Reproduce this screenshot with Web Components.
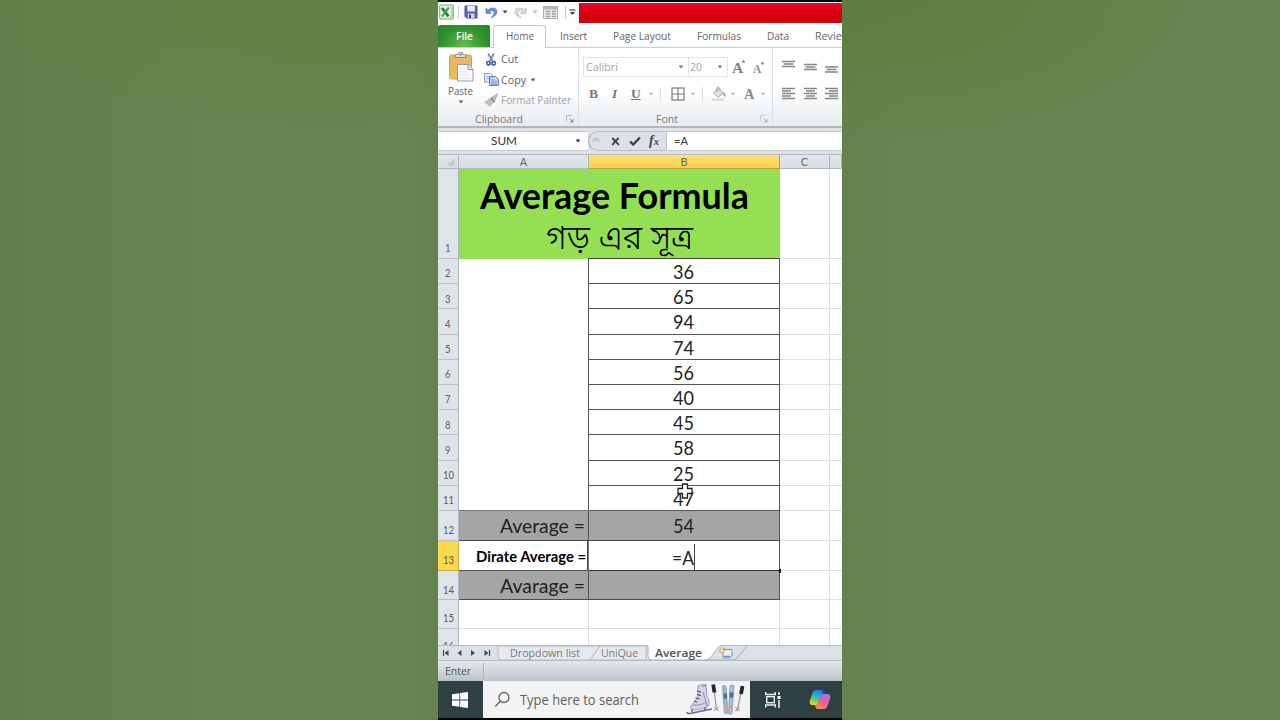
<!DOCTYPE html>
<html lang="en">
<head>
<meta charset="utf-8">
<title>Average Formula</title>
<style>
html,body{margin:0;height:100%;overflow:hidden}
body{font-family:"Open Sans","Noto Sans",sans-serif}
</style>
</head>
<body>
<video-stage>
  <title-bar></title-bar>
  <ribbon-tabs></ribbon-tabs>
  <ribbon-panel></ribbon-panel>
  <formula-bar></formula-bar>
  <sheet-grid></sheet-grid>
  <sheet-tabs></sheet-tabs>
  <status-bar></status-bar>
  <task-bar></task-bar>
</video-stage>
<script>
const define = (name, html, setup) => customElements.define(name, class extends HTMLElement {
  connectedCallback() {
    if (this.shadowRoot) return;
    const t = document.createElement('template');
    t.innerHTML = typeof html === 'function' ? html(this) : html;
    this.attachShadow({mode: 'open'}).appendChild(t.content.cloneNode(true));
    if (setup) setup(this);
  }
});

/* Text condensed or widened to the width given in "w". */
define('fit-text', '<style>:host{display:block;flex:none;white-space:nowrap;line-height:1.2}span{display:inline-block;transform-origin:0 50%}</style><span><slot></slot></span>', el => {
  const s = el.shadowRoot.querySelector('span');
  const w = +el.getAttribute('w');
  const natural = s.getBoundingClientRect().width;
  el.style.width = w + 'px';
  if (natural) s.style.transform = `scaleX(${w / natural})`;
});

const lines = (a, c = '#868686') => `<path d="${a.map(([x, y, w]) => `M${x} ${y}h${w}`).join('')}" stroke="${c}" stroke-width="1.5" fill="none"/>`;
const ICONS = {
  excel: [15, 16, '<rect x=".7" y="1" width="13.6" height="14" rx="1" fill="#e6f3e2" stroke="#6fae6a"/><path d="M11 3h2v10h-2" fill="none" stroke="#8cc48a"/><path d="M3 4l6.5 8.4" stroke="#1f7d2c" stroke-width="2.6"/><path d="M9.800 3.500L3 12.600" stroke="#46a548" stroke-width="2.200"/>'],
  save: [14, 14, '<path d="M1 1h12v12H2.600L1 11.400z" fill="#5a64bd" stroke="#4950a0"/><rect x="3.400" y="1" width="7.400" height="5.400" fill="#eef1fb"/><rect x="3.800" y="8.600" width="6.600" height="4.400" fill="#d9dcec"/><rect x="5" y="9.600" width="2" height="3.400" fill="#353d8c"/>'],
  undo: [13, 13, '<path d="M1 2v5.600h5.400L4.600 5.700C7 4 9.700 5 9 7.600c-.4 1.800-2 3-3.200 4.200 3.400-1 6-3 6.200-5.800C12.200 2 7.600.6 3 3.900z" fill="#6690d0" stroke="#4a72b4" stroke-width=".6"/>'],
  redo: [13, 13, '<path d="M12 2v5.600H6.600l1.800-1.900C6 4 3.300 5 4 7.600c.4 1.800 2 3 3.200 4.200-3.400-1-6-3-6.200-5.800C.8 2 5.400.6 10 3.900z" fill="#dcdcdc" stroke="#b5b5b5" stroke-width=".7"/>'],
  form: [15, 13, '<rect x=".5" y=".5" width="14" height="12" fill="#eee" stroke="#b5adb2"/><rect x="1" y="1" width="13" height="2.600" fill="#bbb3ba"/><path d="M2.500 5.500h5M2.500 8h5M2.500 10.500h5M9 5.500h4M9 8h4M9 10.500h4" stroke="#aaa1a8" stroke-width="1.300"/>'],
  down: [6, 4, '<path d="M.5.5h5L3 3.500z" fill="currentColor"/>'],
  custom: [7, 7, '<path d="M.5 1h6" stroke="#444" stroke-width="1.200"/><path d="M.7 3h5.600L3.500 6z" fill="#444"/>'],
  paste: [26, 30, '<rect x="1.500" y="3" width="22" height="24" rx="2" fill="#e9ba62" stroke="#cf9f50"/><path d="M7 5.500V3.500q0-1 1.500-1H10q0-2 2.500-2t2.500 2h1.500q1.500 0 1.500 1v2z" fill="#dfe1e8" stroke="#7e8291"/><circle cx="12.500" cy="2.700" r="1" fill="#777"/><path d="M9.500 12.500H20l5 5V29H9.500z" fill="#fafcff" stroke="#8f9cb6"/><path d="M20 12.500v5h5" fill="#dbe4f2" stroke="#8391ae"/><path d="M12 17h6M12 20h10M12 23h10M12 26h10" stroke="#dbe3ee"/>'],
  cut: [10, 13, '<path d="M2 .5L6.600 8M8 .5L3.700 8" stroke="#6d86bb" stroke-width="1.700"/><circle cx="2.400" cy="10.200" r="1.700" fill="none" stroke="#3f5fa8" stroke-width="1.700"/><circle cx="7.700" cy="10.200" r="1.700" fill="none" stroke="#3f5fa8" stroke-width="1.700"/>'],
  copy: [15, 13, '<path d="M.6.6h6l2.400 2.400v6H.6z" fill="#eef4fd" stroke="#8498bd"/><path d="M2 3.500h3M2 5.500h4" stroke="#94aee0"/><path d="M5.600 3.600h6l2.700 2.700v6.100H5.600z" fill="#c7dbf8" stroke="#4f6da6"/><path d="M7 7h4M7 9h6M7 11h6" stroke="#6f92d0"/>'],
  brush: [15, 14, '<path d="M13.500.8L8 4.500l2.500 3.300z" fill="#c3c3c3" stroke="#aaa"/><path d="M7.500 3.800l4 4.600-2 1.600L6 5.700z" fill="#999"/><path d="M6 5.600L.8 9.500q2.600.2 4.400 3.700l4.500-3.600z" fill="#cfbcb6" stroke="#b8aaa6" stroke-width=".8"/>'],
  launch: [8, 8, '<path d="M.5 6V.5H6" fill="none" stroke="#b0b7bf"/><path d="M3 3l3 3" stroke="#9fa8b2"/><path d="M7.500 3.500v4h-4z" fill="#8b949e"/>'],
  grow: [14, 16, '<text x="0" y="14" font-family="Liberation Serif" font-weight="bold" font-size="15.500" fill="#808080">A</text><path d="M9.500 3.500h4l-2-2.500z" fill="#777"/>'],
  shrink: [12, 14, '<text x="0" y="12" font-family="Liberation Serif" font-weight="bold" font-size="11.500" fill="#8c8c8c">A</text><path d="M7.500 1.500h4l-2 2.500z" fill="#777"/>'],
  borders: [14, 14, '<rect x="1" y="1" width="12" height="12" fill="none" stroke="#7b7b7b" stroke-width="1.200"/><path d="M7 1v12M1 7h12" stroke="#7b7b7b" stroke-width="1.100"/>'],
  bucket: [16, 16, '<path d="M2.500 6.500l5-4.500 4.800 5L7 11.300z" fill="#e2e2e2" stroke="#a5a5a5"/><path d="M6 6V2q0-1.500 1.500-1T9 5" fill="none" stroke="#a5a5a5"/><path d="M12 6q3 1 2 5.500-1.600-2-2-5.500" fill="#888"/><rect x="1" y="12.500" width="12" height="2.500" fill="#dcdcdc"/>'],
  atop: [14, 13, lines([[1, 1.500, 13], [2.500, 4, 10], [1, 6.500, 13]])],
  amid: [14, 13, lines([[1, 4.500, 13], [2.500, 7, 10], [1, 9.500, 13]])],
  abot: [14, 13, lines([[1, 7, 13], [2.500, 9.500, 10], [1, 12, 13]])],
  left: [14, 13, lines([[1, 1.500, 13], [1, 4, 9], [1, 6.500, 13], [1, 9, 9], [1, 11.500, 13]])],
  mid: [14, 13, lines([[1, 1.500, 13], [3, 4, 9], [1, 6.500, 13], [3, 9, 9], [1, 11.500, 13]])],
  right: [14, 13, lines([[1, 1.500, 13], [5, 4, 9], [1, 6.500, 13], [5, 9, 9], [1, 11.500, 13]])],
  cross: [9, 9, '<path d="M1.300 1q3 3 6.700 7M7.700 1Q4 4 1.300 8" stroke="#3c4147" stroke-width="1.800" fill="none"/>'],
  check: [12, 10, '<path d="M1 5.500l3.200 3L11 1.500" stroke="#3c4147" stroke-width="2.300" fill="none"/>'],
  corner: [8, 8, '<path d="M7.500 0v7.500H0z" fill="#c3c8ce"/>'],
  first: [8, 8, '<path d="M1.500 1v6" stroke="#444b55" stroke-width="1.200"/><path d="M6.500 1v6l-4-3z" fill="#444b55"/>'],
  prev: [6, 8, '<path d="M4.500 1v6l-4-3z" fill="#444b55"/>'],
  next: [6, 8, '<path d="M1 1v6l4-3z" fill="#444b55"/>'],
  last: [8, 8, '<path d="M6.500 1v6" stroke="#444b55" stroke-width="1.200"/><path d="M1.500 1v6l4-3z" fill="#444b55"/>'],
  newtab: [15, 12, '<path d="M5 2.500h9v6.500l-2.500 2H5z" fill="#edf2fc" stroke="#8090b5"/><path d="M6 9.500h6" stroke="#6d86bd" stroke-width="1.500"/><path d="M4 0v7M.5 3.500h7M1.500 1l5 5M6.500 1l-5 5" stroke="#d3a765" stroke-width="1"/><circle cx="4" cy="3.500" r="1.300" fill="#fff2b8"/>'],
  windows: [16, 16, '<path d="M0 2.300L7.400 1.200v6.400H0zM8.200 1.100L16 0v7.600H8.200zM0 8.400h7.400v6.400L0 13.700zM8.200 8.400H16V16l-7.800-1.100z" fill="#fff"/>'],
  search: [17, 17, '<circle cx="10" cy="6.500" r="5" fill="none" stroke="#666" stroke-width="1.300"/><path d="M6.300 10.300L1.200 15.500" stroke="#666" stroke-width="1.400"/>'],
  task: [16, 16, '<path d="M.7 0v2.500h9.600V0M.7 15.500V13h9.600v2.500" fill="none" stroke="#e9eeee" stroke-width="1.400"/><rect x="1.700" y="4.700" width="7.600" height="6" fill="none" stroke="#e9eeee" stroke-width="1.400"/><path d="M14 0v3M14 8v8" stroke="#e9eeee" stroke-width="1.500"/><rect x="12.500" y="4" width="3" height="3" fill="#fff"/>'],
  skates: [60, 32, '<path d="M12 2q4-2 8-1.500.5 6 1 12 3 3 2 8-1 4-9 4.500-8 2-9.500-.5-.5-2 2.500-5 5-5 5-9z" fill="#d5d4e6" stroke="#8b8cb0" stroke-width=".8"/><path d="M16 2q3 1 4-1.500M17 8l4 14M6 21q8 1 15-3" fill="none" stroke="#9c9dc0" stroke-width="1.200"/><path d="M11 7l4 1M11 10.500l4 1M9.500 14l4 1M8 17l3 1" stroke="#4a4d72" stroke-width="1.200"/><path d="M6 25v3M19 23v4" stroke="#6d7388" stroke-width="1.500"/><path d="M1 28q0 2 4 1.300L26 25" fill="none" stroke="#666d80" stroke-width="1.600"/><path d="M27.500 1l3 25" stroke="#999" stroke-width="1.200"/><path d="M27.200.5l1.300 8" stroke="#23262e" stroke-width="3.800"/><path d="M28 23l5 4M33 23l-5 4" stroke="#888" stroke-width=".8"/><path d="M36.500 2q2-2.500 3.800 1l1.500 26q-1.500 2-3.500 0z" fill="#94bdd0" stroke="#7897a8" stroke-width=".7"/><path d="M44 2q2-2.500 4 0l-2 27.500q-2 2-3.500 0z" fill="#a8bede" stroke="#7d92b1" stroke-width=".7"/><path d="M37.500 12h3.500M43.600 11h3.600" stroke="#4a6c91" stroke-width="5"/><path d="M38.300 23h3.300M43 23h3.500" stroke="#d79d8b" stroke-width="4"/><path d="M56 4l-5 23" stroke="#999" stroke-width="1.200"/><path d="M56.500 2L55 10" stroke="#23262e" stroke-width="3.800"/><path d="M49 23l5 4M54 23l-5 4" stroke="#888" stroke-width=".8"/>'],
  copilot: [22, 21, '<defs><linearGradient id="a" x1=".6" y1="0" x2=".3" y2="1"><stop stop-color="#2377ea"/><stop offset=".45" stop-color="#25b7c6"/><stop offset=".75" stop-color="#86ce4d"/><stop offset="1" stop-color="#f1d72e"/></linearGradient><linearGradient id="b" x1=".7" y1="0" x2=".3" y2="1"><stop stop-color="#b06af0"/><stop offset=".5" stop-color="#ee5c94"/><stop offset="1" stop-color="#fa8b50"/></linearGradient></defs><path d="M7 1h6.500Q15 1 15.500 3l.5 2-2 .5q-1.500.5-2 2L9.500 14q-.7 2-2.500 2H4Q-.5 16 1 11L4 3q.8-2 3-2z" fill="url(#a)"/><path d="M15 20H8.500Q7 20 6.500 18L6 16h1.500q1.500 0 2-2L12 7q.7-2 2.500-2H18q4.500 0 3 5l-3 8q-.8 2-3 2z" fill="url(#b)"/><path d="M13 1q2 0 2.500 2l.7 2H14q-1-2-1-4" fill="#1948b9"/>'],
  cursor: [16, 18, '<path d="M5.500 1h5v4.500H15v5h-4.500V15h-5v-4.500H1v-5h4.500z" fill="#fff" stroke="#222" stroke-width="1.300"/>']
};
define('x-icon', el => {
  const [w, h, body] = ICONS[el.getAttribute('name')];
  return `<style>:host{display:block;flex:none;width:${w}px;height:${h}px}svg{display:block}</style><svg width="${w}" height="${h}" viewBox="0 0 ${w} ${h}">${body}</svg>`;
});

define('video-stage', `<style>
:host{display:flex;justify-content:center;width:1280px;height:720px;
background:radial-gradient(ellipse 330px 150px at 330px -10px,rgba(94,129,60,.8) 0,rgba(96,129,64,0) 100%),radial-gradient(ellipse 330px 150px at 880px -5px,rgba(92,124,58,.85) 0,rgba(96,126,64,0) 100%),linear-gradient(90deg,#617f4a,#688452 220px,#688452 400px,#65824e 438px,#65814e 842px,#688451 900px,#688452)}
main{width:404px;height:716px;border-top:2px solid #000;border-bottom:2px solid #000;overflow:hidden;display:flex;flex-direction:column;background:#fff}
</style><main><slot></slot></main>`);

define('title-bar', `<style>
:host{display:flex;align-items:center;height:23px;flex:none;background:#fdfdfe;padding-left:1px;color:#444;box-sizing:border-box;padding-bottom:3px}
.sep{width:1px;height:13px;background:#c9c9cb;flex:none}
.red{flex:1;height:20px;margin-left:3px;margin-top:2px;background:linear-gradient(#ea0420,#dd0012 50%,#c90008)}
</style>
<x-icon name="excel"></x-icon><i class="sep" style="margin-left:4px"></i><x-icon name="save" style="margin-left:5px"></x-icon>
<x-icon name="undo" style="margin-left:7px"></x-icon><x-icon name="down" style="margin-left:4px"></x-icon>
<x-icon name="redo" style="margin-left:6px"></x-icon><x-icon name="down" style="margin-left:5px;color:#bbb"></x-icon>
<x-icon name="form" style="margin-left:5px"></x-icon><i class="sep" style="margin-left:7px"></i><x-icon name="custom" style="margin-left:3px"></x-icon><div class="red"></div>`);

define('ribbon-tabs', `<style>
:host{display:flex;height:23px;flex:none;font-size:11px;color:#666;background:linear-gradient(#fefefe,#fafbfc);box-sizing:border-box;border-bottom:1px solid #c9cdd2;align-items:center}
.file{width:52px;height:22px;border-radius:2px 2px 0 0;background:radial-gradient(ellipse at 50% 100%,#65bd4e,#2d912c 65%,#268128);color:#fff;font-weight:600;display:flex;align-items:center;justify-content:center;flex:none}
.home{width:53px;height:23px;margin:0 0 0 3px;box-sizing:border-box;border:1px solid #c4c8cd;border-bottom:0;border-radius:3px 3px 0 0;background:#fff;display:flex;align-items:center;justify-content:center;flex:none;padding-bottom:1px}
</style>
<div class="file"><fit-text w="17">File</fit-text></div><div class="home"><fit-text w="28">Home</fit-text></div>
<fit-text w="27" style="margin-left:14px">Insert</fit-text><fit-text w="58" style="margin-left:26px">Page Layout</fit-text><fit-text w="44" style="margin-left:26px">Formulas</fit-text><fit-text w="22" style="margin-left:26px">Data</fit-text><fit-text w="35" style="margin-left:26px">Review</fit-text>`);

define('ribbon-panel', `<style>
:host{display:flex;height:80px;flex:none;box-sizing:border-box;border-bottom:2px solid #b1b7be;background:linear-gradient(#fff 0,#fefefe 55%,#eff2f5 85%,#e9edf1);font-size:11px;color:#636363}
section{display:flex;flex-direction:column;box-sizing:border-box;border-right:1px solid #dadee2;height:78px;flex:none}
.foot{display:flex;height:15px;align-items:center;margin-top:auto}
.body{display:flex;height:63px}
.col{display:flex;flex-direction:column}
.row{display:flex;align-items:center}
.paste{width:45px;align-items:center;padding-top:4px;box-sizing:border-box}
.box{box-sizing:border-box;border:1px solid #e1e3e6;height:20px;display:flex;align-items:center;color:#a2a2a2}
.s{font-family:"Liberation Serif",serif;font-weight:bold;font-size:13.500px;color:#787878;line-height:16px}
.dv{width:1px;height:14px;background:#dcdcde}
</style>
<section style="width:141px">
 <div class="body">
  <div class="col paste"><x-icon name="paste"></x-icon><fit-text w="25" style="margin-top:2px;line-height:14px">Paste</fit-text><x-icon name="down" style="margin-top:2px"></x-icon></div>
  <div class="col" style="padding-top:1px;padding-left:1px">
   <div class="row" style="height:20px"><x-icon name="cut" style="margin-left:2px"></x-icon><fit-text w="17" style="margin-left:5px">Cut</fit-text></div>
   <div class="row" style="height:21px"><x-icon name="copy"></x-icon><fit-text w="25" style="margin-left:2px">Copy</fit-text><x-icon name="down" style="margin-left:4px"></x-icon></div>
   <div class="row" style="height:20px;color:#a0a0a0"><x-icon name="brush"></x-icon><fit-text w="70" style="margin-left:2px">Format Painter</fit-text></div>
  </div>
 </div>
 <div class="foot"><fit-text w="48" style="margin-left:37px;color:#777">Clipboard</fit-text><x-icon name="launch" style="margin-left:43px"></x-icon></div>
</section>
<section style="width:194px">
 <div class="body col">
  <div class="row" style="padding:8px 0 0 4px;height:21px">
   <div class="box" style="width:106px"><fit-text w="32" style="margin-left:2px">Calibri</fit-text><x-icon name="down" style="margin-left:auto;margin-right:4px;color:#777"></x-icon></div>
   <div class="box" style="width:39px;border-left:0"><fit-text w="12" style="margin-left:1px">20</fit-text><x-icon name="down" style="margin-left:auto;margin-right:4px;color:#777"></x-icon></div>
   <x-icon name="grow" style="margin-left:4px"></x-icon><x-icon name="shrink" style="margin-left:7px;margin-top:2px"></x-icon>
  </div>
  <div class="row" style="padding:8px 0 0 10px;height:18px;color:#aaa">
   <span class="s" style="width:10px">B</span><span class="s" style="width:9px;margin-left:13px;font-style:italic">I</span><span class="s" style="width:10px;margin-left:10px;text-decoration:underline">U</span>
   <x-icon name="down" style="margin-left:7px;transform:scale(.8)"></x-icon><i class="dv" style="margin-left:6px"></i><x-icon name="borders" style="margin-left:10px"></x-icon><x-icon name="down" style="margin-left:5px;transform:scale(.8)"></x-icon><i class="dv" style="margin-left:6px"></i>
   <x-icon name="bucket" style="margin-left:8px"></x-icon><x-icon name="down" style="margin-left:3px;transform:scale(.8)"></x-icon><span class="s" style="width:10px;margin-left:8px;color:#8b8b8b;font-size:14.500px">A</span><x-icon name="down" style="margin-left:6px;transform:scale(.8)"></x-icon>
  </div>
 </div>
 <div class="foot"><fit-text w="22" style="margin-left:77px;color:#777">Font</fit-text><x-icon name="launch" style="margin-left:82px;opacity:.6"></x-icon></div>
</section>
<div class="col" style="padding-left:8px">
 <div class="row" style="padding-top:12px;gap:7.500px"><x-icon name="atop"></x-icon><x-icon name="amid"></x-icon><x-icon name="abot"></x-icon></div>
 <div class="row" style="padding-top:14px;gap:7.500px"><x-icon name="left"></x-icon><x-icon name="mid"></x-icon><x-icon name="right"></x-icon></div>
</div>`);

define('formula-bar', `<style>
:host{display:flex;height:27px;flex:none;background:#dfe3e8;box-sizing:border-box;padding:3px 0 3px;border-bottom:1px solid #b3b8be;font-family:Lato,sans-serif;font-size:12px;color:#333}
.name{width:150px;background:#fff;border-top:1px solid #c5cad0;border-bottom:1px solid #c5cad0;box-sizing:border-box;display:flex;align-items:center;flex:none}
.fx{width:79px;box-sizing:border-box;border:1px solid #b9bfc6;border-left:1px solid #a6adb5;border-radius:10px 0 0 10px;background:#dde1e6;display:flex;align-items:center;flex:none}
.dot{width:8px;height:6px;border-radius:50%;background:linear-gradient(#b9bdc3,#e9ecef);margin-left:3px}
.in{flex:1;background:#fff;border-top:1px solid #c5cad0;border-bottom:1px solid #c5cad0;display:flex;align-items:center}
em{font-family:"Liberation Serif",serif;font-weight:bold;font-size:14px;line-height:14px;color:#444}
em small{font-size:10.500px}
</style>
<div class="name"><fit-text w="26" style="margin-left:53px">SUM</fit-text><x-icon name="down" style="margin-left:58px"></x-icon></div>
<div class="fx"><i class="dot"></i><x-icon name="cross" style="margin-left:11px"></x-icon><x-icon name="check" style="margin-left:9px"></x-icon><em style="margin-left:8px">f<small>x</small></em></div>
<div class="in"><fit-text w="14" style="margin-left:7px">=A</fit-text></div>`);

const vals = [36, 65, 94, 74, 56, 40, 45, 58, 25, 47];
const B = (v, c = '') => `<div class="b ${c}">${v}</div>`;
const rest = '<div class="c"></div><div class="d"></div>';
const head = (n, c = '') => `<div class="h ${c}"><fit-text w="${n > 9 ? 11 : 5.5}">${n}</fit-text></div>`;
define('sheet-grid', `<style>
:host{display:grid;position:relative;grid-template-columns:21px 130px 191px 50px 12px;grid-template-rows:14px 90px repeat(10,25.200px) 30px 30px 29.500px 28.500px 28px;height:490px;flex:none;overflow:hidden;background:#fff;font-family:Lato,sans-serif;color:#222}
div{box-sizing:border-box;min-width:0;min-height:0}
.col{background:linear-gradient(#e3e7ec,#d9dee4);border-right:1px solid #aeb5bd;border-bottom:1px solid #aeb5bd;font-size:11px;color:#666;display:flex;align-items:center;justify-content:center}
.col.on{background:linear-gradient(#ffe375,#f9d04d);border-color:#c79a3c}
.corner{justify-content:flex-end;padding-right:3px}
.h{background:#dfe4ea;border-right:1px solid #adb5be;border-bottom:1px solid #b9c0c8;display:flex;align-items:flex-end;justify-content:center;font-size:11.500px;padding-bottom:3px;color:#5c5c5c}
.h.on{background:#fbd84f;border-color:#d0a63c}
.a,.b{display:flex;align-items:center;font-size:20px;line-height:24px;white-space:nowrap}
.a{justify-content:flex-end;padding-right:4px}
.b{justify-content:center;padding-right:2px;border-right:1px solid #555;border-bottom:1px solid #555;box-shadow:-1px 0 0 #555}
.c,.d{border-right:1px solid #dcdcdc;border-bottom:1px solid #dfdfdf}
.d{border-right:0}
.title{grid-column:2/4;background:#93e153;border-bottom:1px solid;border-image:linear-gradient(90deg,#93e153 129px,#444 129px) 1;display:flex;flex-direction:column;align-items:center;color:#000}
.g{background:#a5a5a5;border-bottom:1px solid #4b4b4b}
.a.g.first{box-shadow:0 -1px 0 #777}
.edge{border-right:1px solid #444;padding-right:1px;border-bottom:1px solid #555;margin-right:1.500px}
.sel{box-shadow:-1px 0 0 #777;border-bottom:1px solid #333;padding-top:3px;padding-right:1px}
.empty{border-right:1px solid #dcdcdc;border-bottom:1px solid #dcdcdc}
.caret{width:1px;height:26px;background:#444;flex:none}
.cursor{position:absolute;left:239px;top:328px}
.handle{position:absolute;left:341px;top:414px;width:2px;height:4px;background:#111}
.bn{font-family:"Noto Sans Bengali","Noto Serif Bengali","Lohit Bengali","FreeSans","Noto Sans",sans-serif}
</style>
<div class="col corner"><x-icon name="corner"></x-icon></div><div class="col">A</div><div class="col on">B</div><div class="col">C</div><div class="col"></div>
${head(1)}<div class="title"><fit-text w="269" style="font-size:37px;font-weight:bold;line-height:44px;margin-top:4px;margin-right:10px">Average Formula</fit-text><fit-text class="bn" w="147" style="font-size:34px;font-weight:300;line-height:40px;margin-top:4px;margin-right:1px">গড় এর সূত্র</fit-text></div>${rest}
${vals.map((v, i) => head(i + 2) + '<div class="a"></div>' + B(`<fit-text w="21">${v}</fit-text>`) + rest).join('')}
${head(12)}<div class="a g first"><fit-text w="85">Average =</fit-text></div>${B('<fit-text w="21">54</fit-text>', 'g')}${rest}
${head(13, 'on')}<div class="a edge" style="font-size:15px;font-weight:bold;color:#000;padding-top:1px"><fit-text w="110">Dirate Average =</fit-text></div>${B('<fit-text w="22">=A</fit-text><i class="caret"></i>', 'sel')}${rest}
${head(14)}<div class="a g"><fit-text w="85">Avarage =</fit-text></div>${B('', 'g')}${rest}
${head(15)}<div class="a empty"></div><div class="empty"></div>${rest}
${head(16)}<div class="a empty"></div><div class="empty"></div>${rest}
<x-icon class="cursor" name="cursor"></x-icon><i class="handle"></i>`);

define('sheet-tabs', `<style>
:host{display:flex;position:relative;height:16px;flex:none;background:#dbe1e6;font-size:11.500px;color:#777;box-sizing:border-box;align-items:center}
svg{position:absolute;left:0;top:0}
:host>*:not(svg){position:relative}
b{font-weight:600;color:#505050}
</style>
<svg width="404" height="16"><path d="M0 .5H404M0 15.500H404" stroke="#b3bac2"/><path d="M60 1v10q0 4 4 4h88l10-14z" fill="#e6eaee" stroke="#b5bcc4"/><path d="M152 15L162 1h46v14z" fill="#e6eaee" stroke="#b5bcc4"/><path d="M210 0v11q0 4 4 4h53q4 0 6-3l9-12z" fill="#fff"/><path d="M210 1v10q0 4 4 4h53q4 0 6-3l8-11M267 15h27q4 0 6-3l9-11" fill="none" stroke="#a9b1ba"/></svg>
<x-icon name="first" style="margin-left:4px"></x-icon><x-icon name="prev" style="margin-left:7px"></x-icon><x-icon name="next" style="margin-left:7px"></x-icon><x-icon name="last" style="margin-left:7px"></x-icon>
<fit-text w="70" style="margin-left:19px">Dropdown list</fit-text><fit-text w="37" style="margin-left:21px">UniQue</fit-text><b><fit-text w="47" style="margin-left:17px">Average</fit-text></b><x-icon name="newtab" style="margin-left:16px"></x-icon>`);

define('status-bar', `<style>
:host{display:flex;align-items:center;height:20px;flex:none;background:linear-gradient(#e4e8eb,#d0d5da 55%,#bcc3ca);font-size:11px;color:#555}
i{width:1px;height:17px;background:#adb4bb;margin-left:12px}
</style><fit-text w="26" style="margin-left:7px">Enter</fit-text><i></i>`);

define('task-bar', `<style>
:host{display:flex;height:37px;flex:none;background:#2f4044;align-items:center;color:#606060}
.search{width:267px;height:37px;margin-left:15px;background:#f3f3f3;display:flex;align-items:center;flex:none;font-size:14.500px}
</style><x-icon name="windows" style="margin-left:14px"></x-icon>
<div class="search"><x-icon name="search" style="margin-left:11px"></x-icon><fit-text w="119" style="margin-left:9px">Type here to search</fit-text><x-icon name="skates" style="margin-left:47px"></x-icon></div>
<x-icon name="task" style="margin-left:15px"></x-icon><x-icon name="copilot" style="margin-left:28px"></x-icon>`);
</script>
</body>
</html>
